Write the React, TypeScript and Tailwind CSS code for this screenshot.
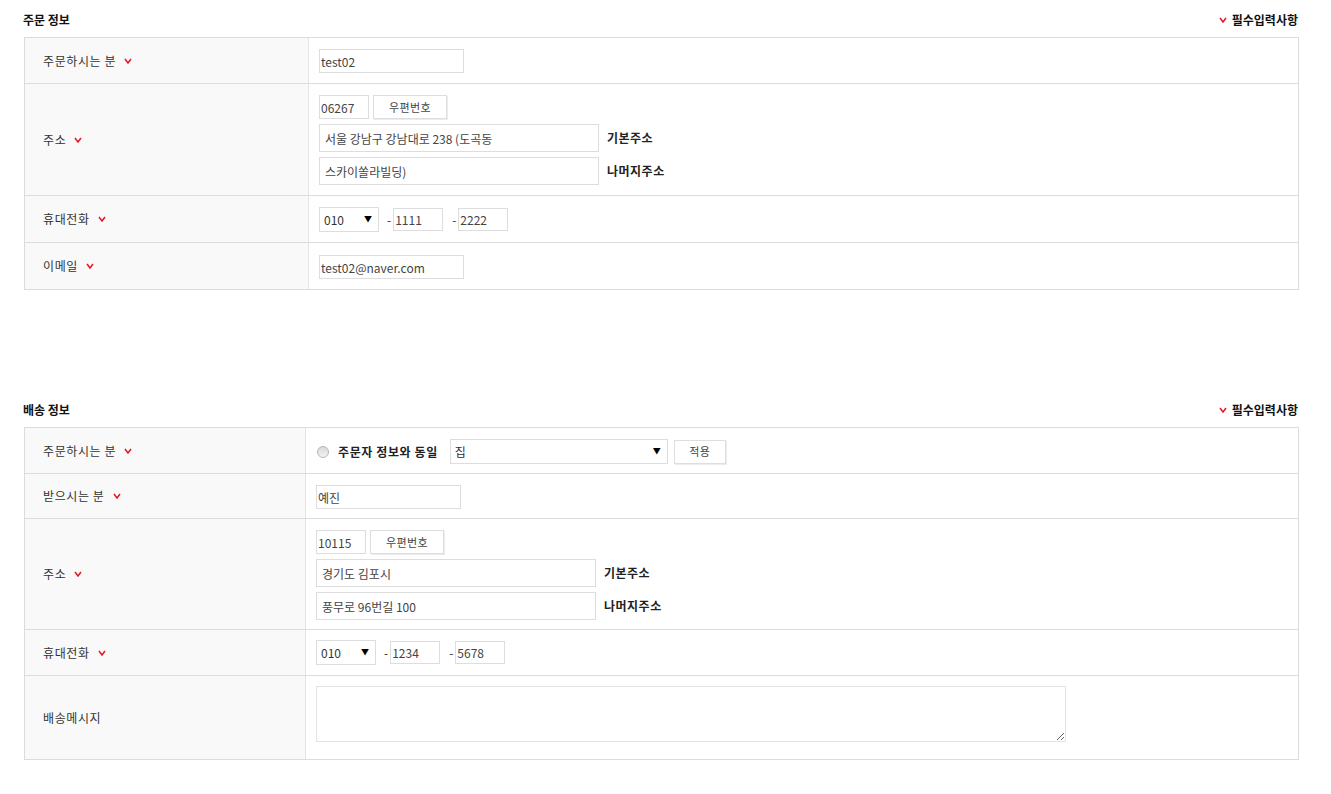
import { ReactNode } from 'react';

const font = { fontFamily: '"Noto Sans CJK KR", "Noto Sans", sans-serif' };

function Req() {
  return (
    <svg width="8" height="6" viewBox="0 0 8 6" className="ml-[8px] inline-block">
      <path d="M1 1 L4 5 L7 1" fill="none" stroke="#e4151f" strokeWidth="1.5" />
    </svg>
  );
}

function Row({ label, req = true, first, labelW, children, pad = 'pt-[11px] pb-[10px]' }: {
  label: string;
  req?: boolean;
  first?: boolean;
  labelW: string;
  children: ReactNode;
  pad?: string;
}) {
  return (
    <div className={'flex ' + (first ? '' : 'border-t border-[#dcdcdc]')}>
      <div className={labelW + ' shrink-0 bg-[#f9f9f9] border-r border-[#e3e3e3] pl-[18px] flex items-center text-[12px] tracking-[0.6px] text-[#333]'}>
        {label}
        {req && <Req />}
      </div>
      <div className={'flex-1 flex flex-col items-start pl-[10px] ' + pad}>{children}</div>
    </div>
  );
}

function Input({ value, w, h = 'h-[24px]', px = 'px-px' }: { value: string; w: string; h?: string; px?: string }) {
  return (
    <input
      readOnly
      value={value}
      className={'block ' + w + ' ' + h + ' ' + px + ' border border-[#dddddd] bg-white text-[12px] text-[#444] outline-none'}
      style={font}
    />
  );
}

function Btn({ children, w }: { children: ReactNode; w: string }) {
  return (
    <button
      className={w + ' block h-[24px] border border-[#dedede] bg-white text-[11px] tracking-[0.4px] text-[#444] shadow-[1px_1px_0_#ececec]'}
      style={font}
    >
      {children}
    </button>
  );
}

function Select({ value, w }: { value: string; w: string }) {
  return (
    <div className={w + ' relative h-[25px] border border-[#dddddd] bg-white flex items-center pl-[4px] text-[12px] text-[#333]'}>
      {value}
      <span className="absolute right-[6px] top-[6px] text-[8px] leading-[10px] text-black">▼</span>
    </div>
  );
}

function Phone({ mid, last }: { mid: string; last: string }) {
  return (
    <div className="flex items-center">
      <Select value="010" w="w-[60px]" />
      <span className="ml-[8px] mr-[2px] text-[12px] text-[#333]">-</span>
      <Input value={mid} w="w-[50px]" h="h-[23px]" />
      <span className="ml-[9px] mr-[2px] text-[12px] text-[#333]">-</span>
      <Input value={last} w="w-[50px]" h="h-[23px]" />
    </div>
  );
}

function Address({ zip, addr1, addr2 }: { zip: string; addr1: string; addr2: string }) {
  return (
    <div className="flex flex-col gap-[5px]">
      <div className="flex gap-[4px]">
        <Input value={zip} w="w-[50px]" />
        <Btn w="w-[74px]">우편번호</Btn>
      </div>
      <div className="flex items-center">
        <Input value={addr1} w="w-[280px]" h="h-[28px]" px="px-[5px]" />
        <span className="ml-[8px] text-[12px] font-bold tracking-[0.5px] text-[#222]">기본주소</span>
      </div>
      <div className="flex items-center">
        <Input value={addr2} w="w-[280px]" h="h-[28px]" px="px-[5px]" />
        <span className="ml-[8px] text-[12px] font-bold tracking-[0.5px] text-[#222]">나머지주소</span>
      </div>
    </div>
  );
}

function Title({ children }: { children: ReactNode }) {
  return (
    <div className="flex items-center justify-between h-[17px] mb-[9px] pl-[23px] pr-[33px]">
      <h3 className="text-[12px] font-bold text-[#111]">{children}</h3>
      <div className="flex items-center text-[12px] font-bold text-[#111]">
        <svg width="8" height="6" viewBox="0 0 8 6" className="mr-[5px]">
          <path d="M1 1 L4 5 L7 1" fill="none" stroke="#e4151f" strokeWidth="1.5" />
        </svg>
        필수입력사항
      </div>
    </div>
  );
}

export default function App() {
  return (
    <div className="w-[1331px] min-h-[794px] bg-white pt-[11px]" style={font}>
      <Title>주문 정보</Title>
      <div className="ml-[24px] w-[1275px] border border-[#dcdcdc]">
        <Row first label="주문하시는 분" labelW="w-[284px]">
          <Input value="test02" w="w-[145px]" />
        </Row>
        <Row label="주소" labelW="w-[284px]">
          <Address zip="06267" addr1="서울 강남구 강남대로 238 (도곡동" addr2="스카이쏠라빌딩)" />
        </Row>
        <Row label="휴대전화" labelW="w-[284px]">
          <Phone mid="1111" last="2222" />
        </Row>
        <Row label="이메일" labelW="w-[284px]" pad="pt-[12px] pb-[10px]">
          <Input value="test02@naver.com" w="w-[145px]" />
        </Row>
      </div>

      <div className="h-[111px]" />

      <Title>배송 정보</Title>
      <div className="ml-[24px] w-[1275px] border border-[#dcdcdc]">
        <Row first label="주문하시는 분" labelW="w-[281px]" pad="pt-[11px] pb-[9px]">
          <div className="flex items-center">
            <span className="ml-[1px] w-[12px] h-[12px] rounded-full border border-[#b5b5b5] bg-gradient-to-b from-[#d8d8d8] to-[#f4f4f4]" />
            <span className="ml-[9px] text-[12px] font-bold tracking-[0.6px] text-[#222]">주문자 정보와 동일</span>
            <div className="ml-[12px]">
              <Select value="집" w="w-[218px]" />
            </div>
            <div className="ml-[6px]">
              <Btn w="w-[52px]">적용</Btn>
            </div>
          </div>
        </Row>
        <Row label="받으시는 분" labelW="w-[281px]" pad="pt-[11px] pb-[9px]">
          <Input value="예진" w="w-[145px]" />
        </Row>
        <Row label="주소" labelW="w-[281px]" pad="pt-[11px] pb-[9px]">
          <Address zip="10115" addr1="경기도 김포시" addr2="풍무로 96번길 100" />
        </Row>
        <Row label="휴대전화" labelW="w-[281px]" pad="pt-[10px] pb-[10px]">
          <Phone mid="1234" last="5678" />
        </Row>
        <Row label="배송메시지" req={false} labelW="w-[281px]" pad="pt-[10px] pb-[17px]">
          <textarea readOnly className="block w-[750px] h-[56px] border border-[#e3e3e3] outline-none" />
        </Row>
      </div>
    </div>
  );
}
